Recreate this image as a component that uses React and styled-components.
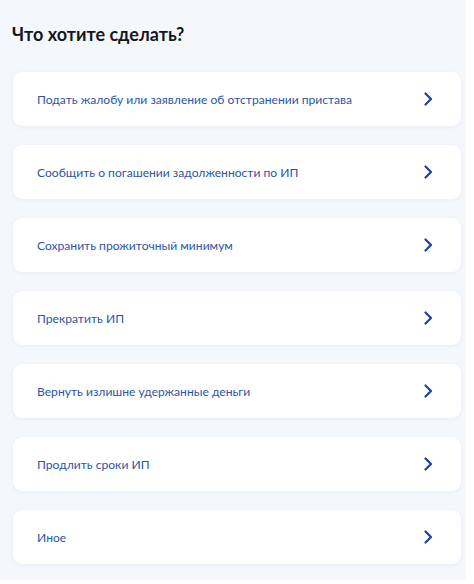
import React from "react";
import styled, { createGlobalStyle } from "styled-components";

const items = [
    "Подать жалобу или заявление об отстранении пристава",
    "Сообщить о погашении задолженности по ИП",
    "Сохранить прожиточный минимум",
    "Прекратить ИП",
    "Вернуть излишне удержанные деньги",
    "Продлить сроки ИП",
    "Иное",
];

const Chevron = () => (
    <svg width="10" height="14" viewBox="0 0 10 14" fill="none">
        <path
            d="M2.5 1.5L8 7L2.5 12.5"
            stroke="#1d3fa6"
            strokeWidth="2.2"
            strokeLinecap="round"
            strokeLinejoin="round"
        />
    </svg>
);

const App = () => {
    return (
        <>
            <GlobalStyle />
            <Page>
                <Title>Что хотите сделать?</Title>
                <List>
                    {items.map((text) => (
                        <Card key={text}>
                            <Label>{text}</Label>
                            <Chevron />
                        </Card>
                    ))}
                </List>
            </Page>
        </>
    );
};

export default App;

const GlobalStyle = createGlobalStyle`
    html, body {
        margin: 0;
        padding: 0;
        background: #ffffff;
    }
    body {
        font-family: Lato, "Noto Sans", sans-serif;
    }
`;

const Page = styled.div`
    width: 466px;
    height: 580px;
    box-sizing: border-box;
    padding: 23px 0 0 13px;
    background: #f4f7fc;
`;

const Title = styled.h1`
    margin: 0 0 27px -1px;
    font-size: 18px;
    line-height: 22px;
    font-weight: 700;
    color: #14171c;
`;

const List = styled.div`
    display: flex;
    flex-direction: column;
    gap: 19px;
    width: 448px;
`;

const Card = styled.div`
    display: flex;
    align-items: center;
    justify-content: space-between;
    height: 54px;
    padding: 0 28px 0 24px;
    background: #ffffff;
    border-radius: 9px;
    box-shadow: 0 1px 4px rgba(40, 70, 140, 0.06);
`;

const Label = styled.span`
    font-size: 12.1px;
    color: #2b55a6;
`;
